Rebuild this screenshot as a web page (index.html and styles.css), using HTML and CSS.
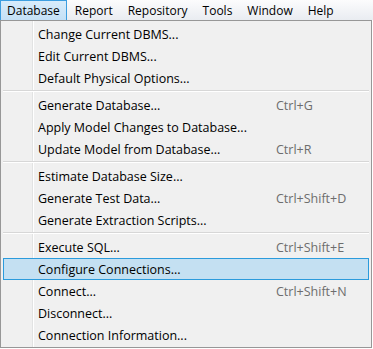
FILE: index.html
```html
<!DOCTYPE html>
<html lang="en">
<head>
<meta charset="UTF-8">
<title>Database menu</title>
<link rel="stylesheet" href="styles.css">
</head>
<body>
<div class="menubar">
    <span class="top-item open">Database</span>
    <span class="top-item">Report</span>
    <span class="top-item">Repository</span>
    <span class="top-item">Tools</span>
    <span class="top-item">Window</span>
    <span class="top-item">Help</span>
</div>
<div class="dropdown">
    <div class="row"><span class="label">Change Current DBMS...</span></div>
    <div class="row"><span class="label">Edit Current DBMS...</span></div>
    <div class="row"><span class="label">Default Physical Options...</span></div>
    <div class="sep"></div>
    <div class="row"><span class="label">Generate Database...</span><span class="key">Ctrl+G</span></div>
    <div class="row"><span class="label">Apply Model Changes to Database...</span></div>
    <div class="row"><span class="label">Update Model from Database...</span><span class="key">Ctrl+R</span></div>
    <div class="sep"></div>
    <div class="row"><span class="label">Estimate Database Size...</span></div>
    <div class="row"><span class="label">Generate Test Data...</span><span class="key">Ctrl+Shift+D</span></div>
    <div class="row"><span class="label">Generate Extraction Scripts...</span></div>
    <div class="sep"></div>
    <div class="row"><span class="label">Execute SQL...</span><span class="key">Ctrl+Shift+E</span></div>
    <div class="row active"><span class="label">Configure Connections...</span></div>
    <div class="row"><span class="label">Connect...</span><span class="key">Ctrl+Shift+N</span></div>
    <div class="row"><span class="label">Disconnect...</span></div>
    <div class="row"><span class="label">Connection Information...</span></div>
</div>
</body>
</html>
```

FILE: styles.css
```css
body{
margin: 0;
background: #fff;
font-family: "Open Sans", "Noto Sans", sans-serif;
font-size: 12px;
color: #000;
}

.menubar{
display: flex;
height: 20px;
background: linear-gradient(#fcfcfd, #e9ecf1);
}

.top-item{
padding: 0 6px;
line-height: 20px;
border: 1px solid transparent;
border-bottom: none;
box-sizing: border-box;
height: 20px;
margin-right: 1px;
}

.top-item.open{
background: linear-gradient(#d8ecfb, #c4e0f6);
border-color: #3d9ee0;
padding: 0 6px;
}

.dropdown{
width: 372px;
box-sizing: border-box;
border: 1px solid #979797;
padding: 2px 2px 1px;
font-size: 12.5px;
background-color: #f0f0f0;
background-image: linear-gradient(to right, transparent 31px, #e2e3e3 31px, #e2e3e3 32px, #fff 32px, #fff 33px, transparent 33px);
}

.row{
display: flex;
align-items: center;
height: 22px;
padding-left: 35px;
box-sizing: border-box;
}

.row.active{
background: #c4e0f2;
border: 1px solid #2b9bdc;
padding-left: 34px;
}

.label{
width: 238px;
flex: none;
}

.key{
color: #6d6d6d;
}

.sep{
margin: 1px 0 2px;
border-top: 1px solid #d7d7d7;
border-bottom: 1px solid #fff;
}
```
